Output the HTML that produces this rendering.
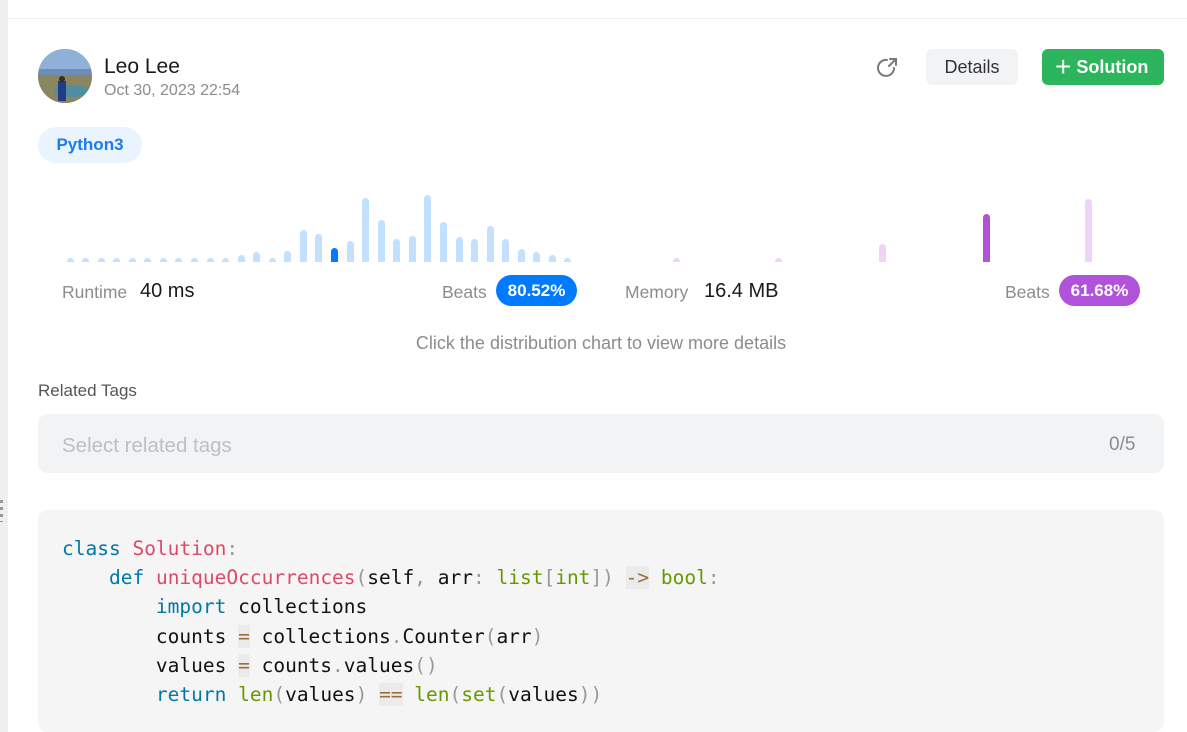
<!DOCTYPE html>
<html><head><meta charset="utf-8"><style>
*{box-sizing:border-box;margin:0;padding:0}
body{width:1187px;height:732px;overflow:hidden;background:#fff;font-family:"Liberation Sans",sans-serif;position:relative}
.strip{position:absolute;left:0;top:0;width:8px;height:732px;background:#f0f0f0}
.topline{position:absolute;left:8px;right:0;top:18px;height:1px;background:#f0f0f0}
.abs{position:absolute;white-space:nowrap}
.bar{position:absolute;width:7px;border-radius:4px 4px 0 0;background:#c3e0ff}
.mb{position:absolute;width:7px;border-radius:4px 4px 0 0;background:#efd4f7}
.code{position:absolute;left:38px;top:510px;width:1126px;height:222px;background:#f5f5f5;border-radius:10px}
pre{position:absolute;left:62px;top:534px;font-family:"DejaVu Sans Mono","Liberation Mono",monospace;font-size:19.5px;line-height:29.2px;color:#111}
.k{color:#07a}.f{color:#dd4a68}.g{color:#690}.o{color:#9a6e3a;background:#ebebeb}.p{color:#999}
</style></head><body>
<div class="strip"></div>
<div class="topline"></div>
<div style="position:absolute;left:0;top:500px;width:3px;height:22px;background:repeating-linear-gradient(#999 0 3px,transparent 3px 7px)"></div>
<svg class="abs" style="left:38px;top:49px" width="54" height="54"><defs><clipPath id="c"><circle cx="27" cy="27" r="27"/></clipPath></defs><g clip-path="url(#c)"><rect width="54" height="54" fill="#6d8db8"/><rect y="0" width="54" height="20" fill="#8fb0d8"/><rect y="26" width="54" height="28" fill="#8a8660"/><ellipse cx="34" cy="42" rx="18" ry="6" fill="#4f8ea0"/><rect x="20" y="32" width="8" height="20" fill="#1e3c88"/><circle cx="24" cy="30" r="3" fill="#3a2a20"/></g></svg>
<div class="abs" style="left:104px;top:55px;font-size:21px;color:#1a1a1a">Leo Lee</div>
<div class="abs" style="left:104px;top:82px;font-size:16px;color:#8c8c8c">Oct 30, 2023 22:54</div>
<svg class="abs" style="left:875px;top:56px" width="24" height="24" viewBox="0 0 24 24" fill="none" stroke="#7a7a7a" stroke-width="2" stroke-linecap="round"><path d="M19 12a8 8 0 1 1-7-8"/><path d="M14 10l7-7M15 3h6v6"/></svg>
<div class="abs" style="left:926px;top:49px;width:92px;height:36px;background:#f2f3f5;border-radius:6px;font-size:18px;color:#333;text-align:center;line-height:36px">Details</div>
<div class="abs" style="left:1042px;top:49px;width:122px;height:36px;background:#2cb55d;border-radius:6px;font-size:18px;font-weight:bold;color:#fff;line-height:36px;padding-left:13px"><span style="font-size:28px;font-weight:normal;vertical-align:-3px">+</span> Solution</div>
<div class="abs" style="left:38px;top:127px;width:104px;height:36px;background:#e9f4ff;border-radius:18px;font-size:17px;font-weight:bold;color:#1a7cf2;text-align:center;line-height:36px">Python3</div>
<div id="bars"></div>
<div class="abs" style="left:62px;top:282px;font-size:17.5px;color:#8c8c8c">Runtime</div>
<div class="abs" style="left:140px;top:280px;font-size:20px;color:#1a1a1a">40 ms</div>
<div class="abs" style="left:442px;top:282px;font-size:17.5px;color:#8c8c8c">Beats</div>
<div class="abs" style="left:496px;top:275px;width:81px;height:31px;background:#007aff;border-radius:16px;font-size:17px;font-weight:bold;color:#fff;text-align:center;line-height:31px">80.52%</div>
<div class="abs" style="left:625px;top:282px;font-size:17.5px;color:#8c8c8c">Memory</div>
<div class="abs" style="left:704px;top:280px;font-size:20px;color:#1a1a1a">16.4 MB</div>
<div class="abs" style="left:1005px;top:282px;font-size:17.5px;color:#8c8c8c">Beats</div>
<div class="abs" style="left:1059px;top:275px;width:81px;height:31px;background:#b052da;border-radius:16px;font-size:17px;font-weight:bold;color:#fff;text-align:center;line-height:31px">61.68%</div>
<div class="abs" style="left:0;width:1202px;top:333px;font-size:18px;color:#8c8c8c;text-align:center">Click the distribution chart to view more details</div>
<div class="abs" style="left:38px;top:381px;font-size:17px;color:#555">Related Tags</div>
<div class="abs" style="left:38px;top:414px;width:1126px;height:59px;background:#f2f3f5;border-radius:10px"></div>
<div class="abs" style="left:62px;top:434px;font-size:20.5px;color:#bfbfbf">Select related tags</div>
<div class="abs" style="left:1109px;top:434px;font-size:19px;color:#8c8c8c">0/5</div>
<div class="code"></div>
<pre><span class="k">class</span> <span class="f">Solution</span><span class="p">:</span>
    <span class="k">def</span> <span class="f">uniqueOccurrences</span><span class="p">(</span>self<span class="p">,</span> arr<span class="p">:</span> <span class="g">list</span><span class="p">[</span><span class="g">int</span><span class="p">])</span> <span class="o">-&gt;</span> <span class="g">bool</span><span class="p">:</span>
        <span class="k">import</span> collections
        counts <span class="o">=</span> collections<span class="p">.</span>Counter<span class="p">(</span>arr<span class="p">)</span>
        values <span class="o">=</span> counts<span class="p">.</span>values<span class="p">()</span>
        <span class="k">return</span> <span class="g">len</span><span class="p">(</span>values<span class="p">)</span> <span class="o">==</span> <span class="g">len</span><span class="p">(</span><span class="g">set</span><span class="p">(</span>values<span class="p">))</span></pre>
<script>
var h=[4,4,4,4,4,4,4,4,4,4,4,8,11,4,13,37,32,16,24,73,48,27,30,77,46,29,27,41,26,15,11,8,5];
var s='';
for(var i=0;i<h.length;i++){var x=70+i*15.56-3.5;var hh=Math.max(4,Math.round(h[i]*0.87));s+='<div class="bar" style="left:'+x+'px;top:'+(262-hh)+'px;height:'+hh+'px;'+(i==17?'background:#007aff':'')+'"></div>';}
var m=[[676,4],[778,4],[882,18],[986,48],[1088,63]];
for(var j=0;j<m.length;j++){s+='<div class="mb" style="left:'+(m[j][0]-3.5)+'px;top:'+(262-m[j][1])+'px;height:'+m[j][1]+'px;'+(j==3?'background:#b052da':'')+'"></div>';}
document.getElementById('bars').innerHTML=s;
</script>
</body></html>
